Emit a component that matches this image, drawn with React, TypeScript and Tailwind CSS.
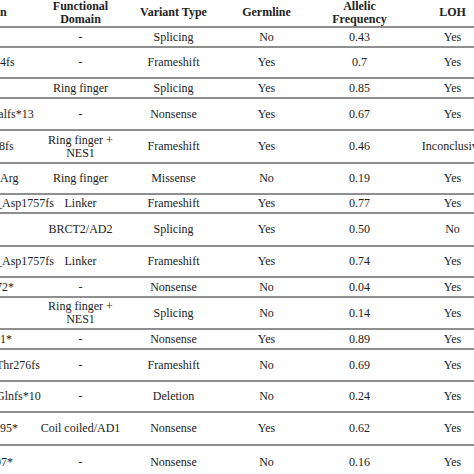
import React from "react";

type Row = {
  c1: string;
  off: string;
  domain: string[];
  type: string;
  germ: string;
  freq: string;
  loh: string;
  h: string;
};

const rows: Row[] = [
  { c1: "", off: "", domain: ["-"], type: "Splicing", germ: "No", freq: "0.43", loh: "Yes", h: "h-[20px]" },
  { c1: "24fs", off: "-ml-[6px]", domain: ["-"], type: "Frameshift", germ: "Yes", freq: "0.7", loh: "Yes", h: "h-[31px]" },
  { c1: "", off: "", domain: ["Ring finger"], type: "Splicing", germ: "Yes", freq: "0.85", loh: "Yes", h: "h-[20px]" },
  { c1: "Valfs*13", off: "-ml-[9px]", domain: ["-"], type: "Nonsense", germ: "Yes", freq: "0.67", loh: "Yes", h: "h-[32px]" },
  { c1: "28fs", off: "-ml-[7px]", domain: ["Ring finger +", "NES1"], type: "Frameshift", germ: "Yes", freq: "0.46", loh: "Inconclusive", h: "h-[33px]" },
  { c1: "1Arg", off: "-ml-[6px]", domain: ["Ring finger"], type: "Missense", germ: "No", freq: "0.19", loh: "Yes", h: "h-[31px]" },
  { c1: "_Asp1757fs", off: "-ml-[4px]", domain: ["Linker"], type: "Frameshift", germ: "Yes", freq: "0.77", loh: "Yes", h: "h-[19px]" },
  { c1: "", off: "", domain: ["BRCT2/AD2"], type: "Splicing", germ: "Yes", freq: "0.50", loh: "No", h: "h-[33px]" },
  { c1: "_Asp1757fs", off: "-ml-[4px]", domain: ["Linker"], type: "Frameshift", germ: "Yes", freq: "0.74", loh: "Yes", h: "h-[31px]" },
  { c1: "72*", off: "-ml-[4px]", domain: ["-"], type: "Nonsense", germ: "No", freq: "0.04", loh: "Yes", h: "h-[20px]" },
  { c1: "", off: "", domain: ["Ring finger +", "NES1"], type: "Splicing", germ: "No", freq: "0.14", loh: "Yes", h: "h-[32px]" },
  { c1: "91*", off: "-ml-[6px]", domain: ["-"], type: "Nonsense", germ: "Yes", freq: "0.89", loh: "Yes", h: "h-[20px]" },
  { c1: "Thr276fs", off: "-ml-[4px]", domain: ["-"], type: "Frameshift", germ: "No", freq: "0.69", loh: "Yes", h: "h-[32px]" },
  { c1: "Glnfs*10", off: "-ml-[4px]", domain: ["-"], type: "Deletion", germ: "No", freq: "0.24", loh: "Yes", h: "h-[31px]" },
  { c1: "395*", off: "-ml-[6px]", domain: ["Coil coiled/AD1"], type: "Nonsense", germ: "Yes", freq: "0.62", loh: "Yes", h: "h-[33px]" },
  { c1: "97*", off: "-ml-[5px]", domain: ["-"], type: "Nonsense", germ: "No", freq: "0.16", loh: "Yes", h: "h-[32px]" },
];

const cell = "flex flex-col items-center justify-center text-center whitespace-nowrap";

export default function App() {
  return (
    <div className="w-[474px] h-[474px] overflow-hidden bg-white text-[#222] text-[12px] leading-[13px] [font-family:'Liberation_Serif','DejaVu_Serif',serif]">
      <div className="w-[499px]">
        {/* header */}
        <div className="grid grid-cols-[34px_repeat(5,93px)] h-[28px] pb-[4px] border-b-2 border-[#8f8f8f] font-bold leading-[12.5px]">
          <div className="flex items-center whitespace-nowrap">
            <span className="-ml-[6px]">on</span>
          </div>
          <div className={cell}>
            <span>Functional</span>
            <span>Domain</span>
          </div>
          <div className={cell}>Variant Type</div>
          <div className={cell}>Germline</div>
          <div className={cell}>
            <span>Allelic</span>
            <span>Frequency</span>
          </div>
          <div className={cell}>LOH</div>
        </div>

        {rows.map((r, i) => (
          <div
            key={i}
            className={`grid grid-cols-[34px_repeat(5,93px)] ${r.h} ${i < rows.length - 1 ? "border-b-2 border-[#8f8f8f]" : ""}`}
          >
            <div className="flex items-center whitespace-nowrap">
              <span className={r.off}>{r.c1}</span>
            </div>
            <div className={cell}>
              {r.domain.map((d) => (
                <span key={d}>{d}</span>
              ))}
            </div>
            <div className={cell}>{r.type}</div>
            <div className={cell}>{r.germ}</div>
            <div className={cell}>{r.freq}</div>
            <div className={cell}>{r.loh}</div>
          </div>
        ))}
      </div>
    </div>
  );
}
